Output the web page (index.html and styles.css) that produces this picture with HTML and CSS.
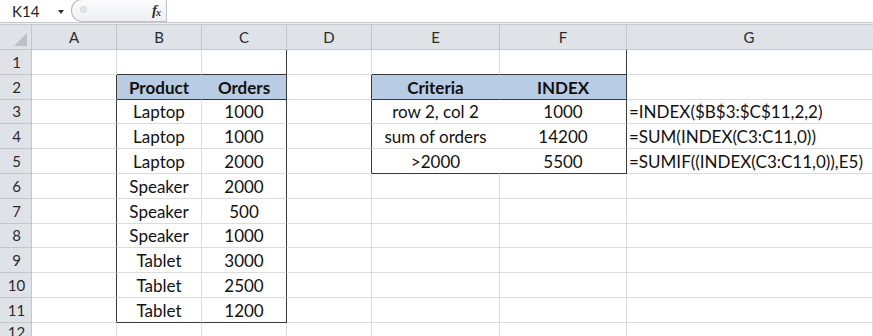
FILE: index.html
```html
<!DOCTYPE html>
<html>
<head>
<meta charset="utf-8">
<link rel="stylesheet" href="styles.css">
</head>
<body>
<div class="app">
  <div class="fbar">
    <div class="namebox"><span class="ref">K14</span><span class="arrow"></span></div>
    <div class="fxbox"><span class="knob"></span><span class="fx">f<sub>x</sub></span></div>
    <div class="finput"></div>
  </div>
  <div class="sep"></div>
  <div class="sheet">
    <div class="corner"><span class="tri"></span></div>
    <div class="ch">A</div><div class="ch">B</div><div class="ch">C</div><div class="ch">D</div><div class="ch">E</div><div class="ch">F</div><div class="ch last">G</div>

    <div class="rh">1</div>
    <div class="c"></div><div class="c bb"></div><div class="c bb br"></div><div class="c"></div><div class="c bb"></div><div class="c bb br"></div><div class="c"></div>

    <div class="rh">2</div>
    <div class="c br"></div><div class="c hd nr">Product</div><div class="c hd br">Orders</div><div class="c br"></div><div class="c hd nr">Criteria</div><div class="c hd br">INDEX</div><div class="c"></div>

    <div class="rh">3</div>
    <div class="c br"></div><div class="c t">Laptop</div><div class="c t br">1000</div><div class="c br"></div><div class="c t nr">row 2, col 2</div><div class="c t br">1000</div><div class="c f">=INDEX($B$3:$C$11,2,2)</div>

    <div class="rh">4</div>
    <div class="c br"></div><div class="c t">Laptop</div><div class="c t br">1000</div><div class="c br"></div><div class="c t nr">sum of orders</div><div class="c t br">14200</div><div class="c f">=SUM(INDEX(C3:C11,0))</div>

    <div class="rh">5</div>
    <div class="c br"></div><div class="c t">Laptop</div><div class="c t br">2000</div><div class="c br"></div><div class="c t nr bb">&gt;2000</div><div class="c t br bb">5500</div><div class="c f">=SUMIF((INDEX(C3:C11,0)),E5)</div>

    <div class="rh">6</div>
    <div class="c br"></div><div class="c t">Speaker</div><div class="c t br">2000</div><div class="c"></div><div class="c"></div><div class="c"></div><div class="c"></div>

    <div class="rh">7</div>
    <div class="c br"></div><div class="c t">Speaker</div><div class="c t br">500</div><div class="c"></div><div class="c"></div><div class="c"></div><div class="c"></div>

    <div class="rh">8</div>
    <div class="c br"></div><div class="c t">Speaker</div><div class="c t br">1000</div><div class="c"></div><div class="c"></div><div class="c"></div><div class="c"></div>

    <div class="rh">9</div>
    <div class="c br"></div><div class="c t">Tablet</div><div class="c t br">3000</div><div class="c"></div><div class="c"></div><div class="c"></div><div class="c"></div>

    <div class="rh">10</div>
    <div class="c br"></div><div class="c t">Tablet</div><div class="c t br">2500</div><div class="c"></div><div class="c"></div><div class="c"></div><div class="c"></div>

    <div class="rh">11</div>
    <div class="c br"></div><div class="c t bb">Tablet</div><div class="c t br bb">1200</div><div class="c"></div><div class="c"></div><div class="c"></div><div class="c"></div>

    <div class="rh">12</div>
    <div class="c"></div><div class="c"></div><div class="c"></div><div class="c"></div><div class="c"></div><div class="c"></div><div class="c"></div>
  </div>
</div>
</body>
</html>
```
FILE: styles.css
```css
* { box-sizing: border-box; }
html, body { margin: 0; padding: 0; background: #fff; }
body { width: 873px; height: 336px; overflow: hidden; font-family: Lato, "Open Sans", sans-serif; }

.app { display: flex; flex-direction: column; width: 873px; height: 336px; overflow: hidden; }

.fbar { display: flex; height: 22px; flex: none; }
.namebox { width: 71px; display: flex; align-items: center; padding-left: 12px; }
.ref { font-size: 15px; color: #222; width: 42px; }
.arrow { width: 0; height: 0; border-left: 3.5px solid transparent; border-right: 3.5px solid transparent; border-top: 4px solid #333; margin-left: 4px; margin-top: 1px; }
.fxbox { width: 96px; height: 23px; margin-top: -1px; border: 1px solid #bfc3c8; border-left-color: #b4b8bd; border-top-left-radius: 11px; border-bottom-left-radius: 11px; background: linear-gradient(#fbfbfc, #eef0f2); display: flex; align-items: center; }
.knob { width: 7px; height: 7px; border-radius: 50%; background: #e4e6e9; border: 1px solid #d2d5d9; margin-left: 8px; margin-top: -2px; }
.fx { font-family: "Liberation Serif", serif; font-style: italic; font-weight: bold; font-size: 15px; color: #333; margin-left: auto; margin-right: 6px; letter-spacing: -1px; }
.fx sub { font-size: 10px; vertical-align: -1px; }
.finput { flex: 1; }

.sep { height: 3px; flex: none; border-top: 1px solid #c6c9cd; border-bottom: 1px solid #c6c9cd; background: #eceef0; }

.sheet { flex: 1; display: grid; grid-template-columns: 32px 85px 85px 85px 85px 128px 127px 1fr; grid-template-rows: 25px repeat(11, 24.8px) 1fr; }

.corner { background: #dfe3e8; border-right: 1px solid #c3c7cc; border-bottom: 1px solid #c3c7cc; position: relative; }
.tri { position: absolute; right: 4px; bottom: 3px; width: 0; height: 0; border-left: 13px solid transparent; border-bottom: 13px solid #bcc1c7; }
.ch { background: #dfe3e8; border-right: 1px solid #c3c7cc; border-bottom: 1px solid #c3c7cc; font-size: 15px; color: #2b2b2b; display: flex; align-items: center; justify-content: center; }
.ch.last { border-right: none; padding-right: 2px; }
.rh { background: #dfe3e8; border-right: 1px solid #c3c7cc; border-bottom: 1px solid #c3c7cc; font-size: 15px; color: #2b2b2b; display: flex; align-items: center; justify-content: center; padding-left: 2px; }

.c { border-right: 1px solid #dadcdd; border-bottom: 1px solid #dadcdd; font-size: 17px; color: #111; display: flex; align-items: center; justify-content: center; white-space: nowrap; padding-top: 1px; }
.c.t { background: #fff; }
.c.nr { border-right-color: #fff; }
.c.hd { background: #b8cce4; font-weight: bold; border-bottom-color: #3a3a3a; }
.c.hd.nr { border-right-color: #b8cce4; }
.c.br { border-right-color: #3a3a3a; }
.c.bb { border-bottom-color: #3a3a3a; }
.c.f { justify-content: flex-start; padding-left: 2px; overflow: visible; }
```
